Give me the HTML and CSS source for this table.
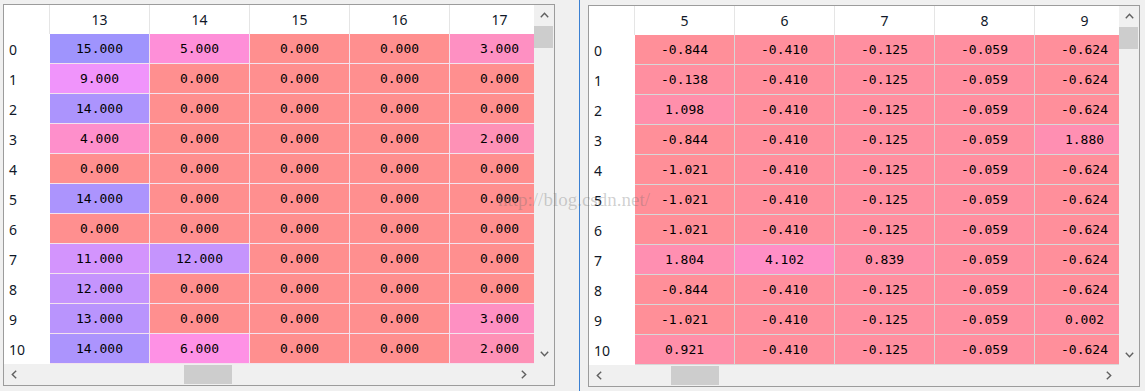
FILE: index.html
```html
<!DOCTYPE html>
<html>
<head>
<meta charset="utf-8">
<title>Tables</title>
<link rel="stylesheet" href="styles.css">
</head>
<body>
<div class="screen">
  <section class="pane pane-a">
    <div class="view">
      <div class="grid grid-a">
        <div class="corner-h"></div>
        <div class="colh">13</div><div class="colh">14</div><div class="colh">15</div><div class="colh">16</div><div class="colh">17</div>

        <div class="rowh">0</div>
        <div class="cell" style="background:#9f94fd">15.000</div><div class="cell" style="background:#fe8fd8">5.000</div><div class="cell" style="background:#ff8f8f">0.000</div><div class="cell" style="background:#ff8f8f">0.000</div><div class="cell" style="background:#fe90c2">3.000</div>

        <div class="rowh">1</div>
        <div class="cell" style="background:#f094fb">9.000</div><div class="cell" style="background:#ff8f8f">0.000</div><div class="cell" style="background:#ff8f8f">0.000</div><div class="cell" style="background:#ff8f8f">0.000</div><div class="cell" style="background:#ff8f8f">0.000</div>

        <div class="rowh">2</div>
        <div class="cell" style="background:#ac94fd">14.000</div><div class="cell" style="background:#ff8f8f">0.000</div><div class="cell" style="background:#ff8f8f">0.000</div><div class="cell" style="background:#ff8f8f">0.000</div><div class="cell" style="background:#ff8f8f">0.000</div>

        <div class="rowh">3</div>
        <div class="cell" style="background:#fe8fcb">4.000</div><div class="cell" style="background:#ff8f8f">0.000</div><div class="cell" style="background:#ff8f8f">0.000</div><div class="cell" style="background:#ff8f8f">0.000</div><div class="cell" style="background:#fe91b6">2.000</div>

        <div class="rowh">4</div>
        <div class="cell" style="background:#ff8f8f">0.000</div><div class="cell" style="background:#ff8f8f">0.000</div><div class="cell" style="background:#ff8f8f">0.000</div><div class="cell" style="background:#ff8f8f">0.000</div><div class="cell" style="background:#ff8f8f">0.000</div>

        <div class="rowh">5</div>
        <div class="cell" style="background:#ac94fd">14.000</div><div class="cell" style="background:#ff8f8f">0.000</div><div class="cell" style="background:#ff8f8f">0.000</div><div class="cell" style="background:#ff8f8f">0.000</div><div class="cell" style="background:#ff8f8f">0.000</div>

        <div class="rowh">6</div>
        <div class="cell" style="background:#ff8f8f">0.000</div><div class="cell" style="background:#ff8f8f">0.000</div><div class="cell" style="background:#ff8f8f">0.000</div><div class="cell" style="background:#ff8f8f">0.000</div><div class="cell" style="background:#ff8f8f">0.000</div>

        <div class="rowh">7</div>
        <div class="cell" style="background:#d394fd">11.000</div><div class="cell" style="background:#c594fd">12.000</div><div class="cell" style="background:#ff8f8f">0.000</div><div class="cell" style="background:#ff8f8f">0.000</div><div class="cell" style="background:#ff8f8f">0.000</div>

        <div class="rowh">8</div>
        <div class="cell" style="background:#c594fd">12.000</div><div class="cell" style="background:#ff8f8f">0.000</div><div class="cell" style="background:#ff8f8f">0.000</div><div class="cell" style="background:#ff8f8f">0.000</div><div class="cell" style="background:#ff8f8f">0.000</div>

        <div class="rowh">9</div>
        <div class="cell" style="background:#b994fd">13.000</div><div class="cell" style="background:#ff8f8f">0.000</div><div class="cell" style="background:#ff8f8f">0.000</div><div class="cell" style="background:#ff8f8f">0.000</div><div class="cell" style="background:#fe90c2">3.000</div>

        <div class="rowh">10</div>
        <div class="cell" style="background:#ac94fd">14.000</div><div class="cell" style="background:#fe91e5">6.000</div><div class="cell" style="background:#ff8f8f">0.000</div><div class="cell" style="background:#ff8f8f">0.000</div><div class="cell" style="background:#fe91b6">2.000</div>
      </div>
    </div>
    <div class="vscroll">
      <div class="sbtn"><svg width="9" height="6" viewBox="0 0 9 6"><path d="M0.8 5.2 L4.5 1.3 L8.2 5.2" fill="none" stroke="#606060" stroke-width="1.4"/></svg></div>
      <div class="vthumb"></div>
      <div class="spacer"></div>
      <div class="sbtn"><svg width="9" height="6" viewBox="0 0 9 6"><path d="M0.8 0.8 L4.5 4.7 L8.2 0.8" fill="none" stroke="#606060" stroke-width="1.4"/></svg></div>
    </div>
    <div class="hscroll">
      <div class="sbtn"><svg width="6" height="9" viewBox="0 0 6 9"><path d="M5.2 0.8 L1.3 4.5 L5.2 8.2" fill="none" stroke="#606060" stroke-width="1.4"/></svg></div>
      <div class="hthumb hthumb-a"></div>
      <div class="spacer"></div>
      <div class="sbtn"><svg width="6" height="9" viewBox="0 0 6 9"><path d="M0.8 0.8 L4.7 4.5 L0.8 8.2" fill="none" stroke="#606060" stroke-width="1.4"/></svg></div>
    </div>
    <div class="sizegrip"></div>
  </section>

  <div class="splitter"><div class="edge"></div></div>

  <section class="pane pane-b">
    <div class="view">
      <div class="grid grid-b">
        <div class="corner-h"></div>
        <div class="colh">5</div><div class="colh">6</div><div class="colh">7</div><div class="colh">8</div><div class="colh">9</div>

        <div class="rowh">0</div>
        <div class="cell" style="background:#ff8f99">-0.844</div><div class="cell" style="background:#ff8f9d">-0.410</div><div class="cell" style="background:#ff8fa0">-0.125</div><div class="cell" style="background:#ff8fa0">-0.059</div><div class="cell" style="background:#ff8f9b">-0.624</div>

        <div class="rowh">1</div>
        <div class="cell" style="background:#ff8fa0">-0.138</div><div class="cell" style="background:#ff8f9d">-0.410</div><div class="cell" style="background:#ff8fa0">-0.125</div><div class="cell" style="background:#ff8fa0">-0.059</div><div class="cell" style="background:#ff8f9b">-0.624</div>

        <div class="rowh">2</div>
        <div class="cell" style="background:#ff8fab">1.098</div><div class="cell" style="background:#ff8f9d">-0.410</div><div class="cell" style="background:#ff8fa0">-0.125</div><div class="cell" style="background:#ff8fa0">-0.059</div><div class="cell" style="background:#ff8f9b">-0.624</div>

        <div class="rowh">3</div>
        <div class="cell" style="background:#ff8f99">-0.844</div><div class="cell" style="background:#ff8f9d">-0.410</div><div class="cell" style="background:#ff8fa0">-0.125</div><div class="cell" style="background:#ff8fa0">-0.059</div><div class="cell" style="background:#ff8fb2">1.880</div>

        <div class="rowh">4</div>
        <div class="cell" style="background:#ff8f98">-1.021</div><div class="cell" style="background:#ff8f9d">-0.410</div><div class="cell" style="background:#ff8fa0">-0.125</div><div class="cell" style="background:#ff8fa0">-0.059</div><div class="cell" style="background:#ff8f9b">-0.624</div>

        <div class="rowh">5</div>
        <div class="cell" style="background:#ff8f98">-1.021</div><div class="cell" style="background:#ff8f9d">-0.410</div><div class="cell" style="background:#ff8fa0">-0.125</div><div class="cell" style="background:#ff8fa0">-0.059</div><div class="cell" style="background:#ff8f9b">-0.624</div>

        <div class="rowh">6</div>
        <div class="cell" style="background:#ff8f98">-1.021</div><div class="cell" style="background:#ff8f9d">-0.410</div><div class="cell" style="background:#ff8fa0">-0.125</div><div class="cell" style="background:#ff8fa0">-0.059</div><div class="cell" style="background:#ff8f9b">-0.624</div>

        <div class="rowh">7</div>
        <div class="cell" style="background:#ff8fb1">1.804</div><div class="cell" style="background:#ff8fc6">4.102</div><div class="cell" style="background:#ff8fa8">0.839</div><div class="cell" style="background:#ff8fa0">-0.059</div><div class="cell" style="background:#ff8f9b">-0.624</div>

        <div class="rowh">8</div>
        <div class="cell" style="background:#ff8f99">-0.844</div><div class="cell" style="background:#ff8f9d">-0.410</div><div class="cell" style="background:#ff8fa0">-0.125</div><div class="cell" style="background:#ff8fa0">-0.059</div><div class="cell" style="background:#ff8f9b">-0.624</div>

        <div class="rowh">9</div>
        <div class="cell" style="background:#ff8f98">-1.021</div><div class="cell" style="background:#ff8f9d">-0.410</div><div class="cell" style="background:#ff8fa0">-0.125</div><div class="cell" style="background:#ff8fa0">-0.059</div><div class="cell" style="background:#ff8fa1">0.002</div>

        <div class="rowh">10</div>
        <div class="cell" style="background:#ff8fa9">0.921</div><div class="cell" style="background:#ff8f9d">-0.410</div><div class="cell" style="background:#ff8fa0">-0.125</div><div class="cell" style="background:#ff8fa0">-0.059</div><div class="cell" style="background:#ff8f9b">-0.624</div>
      </div>
    </div>
    <div class="vscroll">
      <div class="sbtn"><svg width="9" height="6" viewBox="0 0 9 6"><path d="M0.8 5.2 L4.5 1.3 L8.2 5.2" fill="none" stroke="#606060" stroke-width="1.4"/></svg></div>
      <div class="vthumb"></div>
      <div class="spacer"></div>
      <div class="sbtn"><svg width="9" height="6" viewBox="0 0 9 6"><path d="M0.8 0.8 L4.5 4.7 L8.2 0.8" fill="none" stroke="#606060" stroke-width="1.4"/></svg></div>
    </div>
    <div class="hscroll">
      <div class="sbtn"><svg width="6" height="9" viewBox="0 0 6 9"><path d="M5.2 0.8 L1.3 4.5 L5.2 8.2" fill="none" stroke="#606060" stroke-width="1.4"/></svg></div>
      <div class="hthumb hthumb-b"></div>
      <div class="spacer"></div>
      <div class="sbtn"><svg width="6" height="9" viewBox="0 0 6 9"><path d="M0.8 0.8 L4.7 4.5 L0.8 8.2" fill="none" stroke="#606060" stroke-width="1.4"/></svg></div>
    </div>
    <div class="sizegrip"></div>
  </section>

  <div class="watermark">http://blog.csdn.net/</div>
</div>
</body>
</html>
```

FILE: styles.css
```css
html, body {
  margin: 0;
  padding: 0;
  background: #f0f0f0;
}

body {
  width: 1145px;
  height: 391px;
  overflow: hidden;
}

.screen {
  position: relative;
  display: flex;
  align-items: flex-start;
  height: 391px;
  padding-left: 3px;
  box-sizing: border-box;
}

.pane {
  flex: none;
  display: grid;
  grid-template-columns: 530px 20px;
  grid-template-rows: 359px 21px;
  border: 1px solid #9c9c9c;
  background: #f0f0f0;
}

.pane-a { margin-top: 4px; }
.pane-b { margin-top: 5px; }

.splitter {
  flex: none;
  width: 33px;
  height: 391px;
  padding-left: 24px;
  box-sizing: border-box;
  display: flex;
}

.edge {
  width: 1px;
  background: #3b80d2;
}

.view {
  overflow: hidden;
  background: #ffffff;
}

.grid {
  display: grid;
  grid-template-columns: 46px repeat(5, 100px);
  grid-template-rows: 29px repeat(11, 30px);
  width: 546px;
}

.corner-h {
  background: #fff;
  border-right: 1px solid #e5e5e5;
}

.colh {
  display: flex;
  align-items: center;
  justify-content: center;
  background: #fff;
  border-right: 1px solid #e5e5e5;
  box-sizing: border-box;
  font-family: "Noto Sans", "Open Sans", sans-serif;
  font-size: 14px;
  color: #101828;
}

.rowh {
  display: flex;
  align-items: center;
  padding-left: 5px;
  background: #fff;
  font-family: "Noto Sans", "Open Sans", sans-serif;
  font-size: 14px;
  color: #101828;
}

.cell {
  display: flex;
  align-items: center;
  justify-content: center;
  box-sizing: border-box;
  border-right: 1px solid;
  border-bottom: 1px solid;
  font-family: "DejaVu Sans Mono", "Liberation Mono", monospace;
  font-size: 13px;
  color: #000;
  white-space: nowrap;
}

.grid-a .cell { border-color: #f3e3ee; }
.grid-b .cell { border-color: #d7d7d7; }

.vscroll {
  display: flex;
  flex-direction: column;
  background: #f0f0f0;
}

.hscroll {
  display: flex;
  flex-direction: row;
  align-items: center;
  background: #f0f0f0;
}

.sbtn {
  flex: none;
  display: flex;
  align-items: center;
  justify-content: center;
}

.vscroll .sbtn { height: 20px; }
.hscroll .sbtn { width: 20px; height: 21px; }

.spacer { flex: 1; }

.vthumb {
  flex: none;
  height: 22px;
  margin-top: 1px;
  margin-right: 1px;
  background: #cdcdcd;
}

.hthumb {
  flex: none;
  width: 48px;
  height: 19px;
  background: #cdcdcd;
}

.hthumb-a { margin-left: 160px; }
.hthumb-b { margin-left: 62px; }

.sizegrip {
  background: #f0f0f0;
}

.watermark {
  position: absolute;
  left: 498px;
  top: 190px;
  font-family: "Liberation Serif", serif;
  font-size: 19px;
  line-height: 20px;
  color: rgba(110, 110, 110, 0.33);
  white-space: nowrap;
  pointer-events: none;
}
```
